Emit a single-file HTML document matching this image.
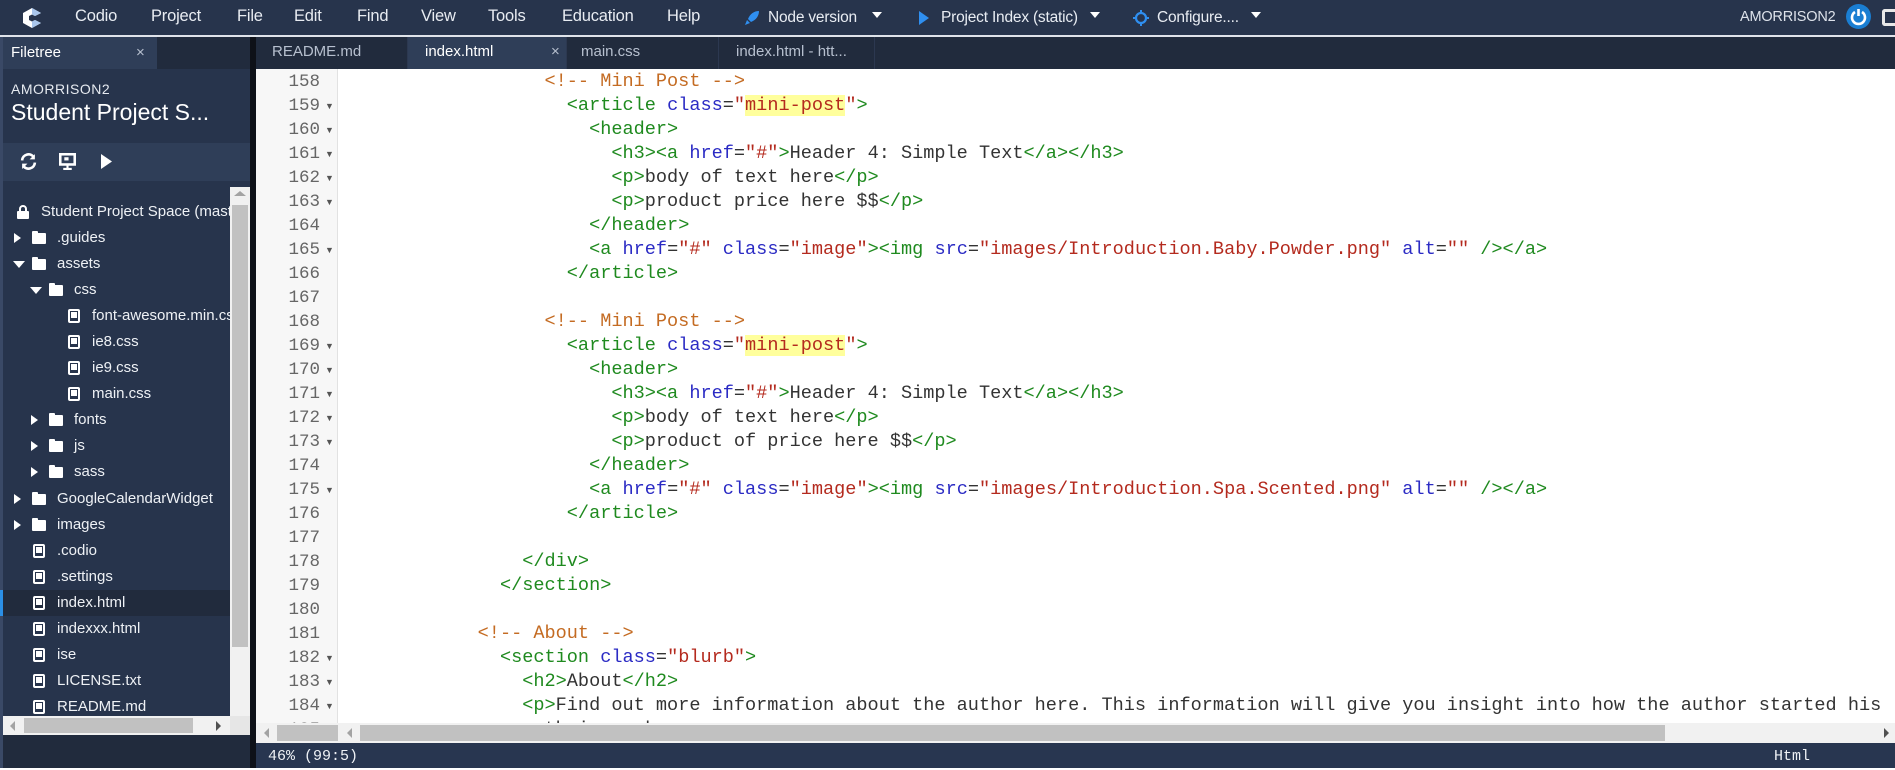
<!DOCTYPE html>
<html><head><meta charset="utf-8"><style>
*{margin:0;padding:0;box-sizing:border-box}
body{width:1895px;height:768px;overflow:hidden;background:#fff;font-family:"Liberation Sans",sans-serif;position:relative}
.abs{position:absolute}
#top{left:0;top:0;width:1895px;height:35px;background:#27344c}
#line{left:0;top:35px;width:1895px;height:2px;background:#dfe3ea}
.m{position:absolute;top:7px;color:#e8ecf2;font-size:16.5px;letter-spacing:-0.2px}
.car{position:absolute;top:12px;width:0;height:0;border-left:5px solid transparent;border-right:5px solid transparent;border-top:6px solid #fff}
#left{left:0;top:37px;width:250px;height:731px;background:#27344c}
#sep{left:250px;top:37px;width:6px;height:731px;background:#0e1118}
#tabs{left:256px;top:37px;width:1639px;height:32px;background:#212b3d}
.tab{position:absolute;top:0;height:32px;color:#b7c0cf;font-size:15px;line-height:30px;border-right:1px solid #2c3850}
.tree{position:absolute;left:0;width:230px;height:26px;color:#eef1f5;font-size:15px;line-height:26px;white-space:nowrap;overflow:hidden}
.tree span{position:absolute;top:0}
.fold{position:absolute;width:14px;height:11px;background:#fff;border-radius:1px;top:8px}
.fold:before{content:"";position:absolute;left:0;top:-2px;width:6px;height:3px;background:#fff;border-radius:1px 1px 0 0}
.file{position:absolute;top:6px;width:12px;height:14px;border:2px solid #fff;border-radius:2px;background:transparent}
.file:after{content:"";position:absolute;left:1px;top:1px;width:6px;height:6px;background:#fff}
.ar{position:absolute;top:8px;width:0;height:0;border-top:5px solid transparent;border-bottom:5px solid transparent;border-left:7px solid #fff}
.ad{position:absolute;top:10px;width:0;height:0;border-left:6px solid transparent;border-right:6px solid transparent;border-top:7px solid #fff}
#gut{left:256px;top:69px;width:82px;height:654px;background:#f7f7f7;border-right:1px solid #e2e2e2;overflow:hidden}
.ln{position:absolute;left:0;width:64px;text-align:right;font-family:"Liberation Mono",monospace;font-size:17.5px;color:#666;height:24px;line-height:24px}
.fa{position:absolute;left:69px;font-size:9px;color:#555;line-height:24px}
#code{left:344px;top:70px;width:1551px;height:653px;overflow:hidden}
.cl{position:absolute;left:0;height:24px;line-height:24px;white-space:pre;font-family:"Liberation Mono",monospace;font-size:18.57px;color:#333}
.t{color:#1f8a1f}.a{color:#2b2bc4}.s{color:#b42a1e}.c{color:#c46b22}.h{background:#ffff9c}
</style></head><body>
<div id="top" class="abs">
 <svg class="abs" style="left:21px;top:7px" width="22" height="22" viewBox="0 0 22 22"><path d="M11 1 L20 6 L14 9 L11 7.5 L8 9 L8 13 L11 14.5 L14 13 L20 16 L11 21 L2 16 L2 6 Z" fill="#fff"/><path d="M11 1 L20 6 L14 9 L11 7.5 Z" fill="#a9c6ec"/><path d="M14 13 L20 16 L11 21 L11 14.5 Z" fill="#a9c6ec"/></svg>
 <span class="m" style="left:75px">Codio</span>
 <span class="m" style="left:151px">Project</span>
 <span class="m" style="left:237px">File</span>
 <span class="m" style="left:294px">Edit</span>
 <span class="m" style="left:357px">Find</span>
 <span class="m" style="left:421px">View</span>
 <span class="m" style="left:488px">Tools</span>
 <span class="m" style="left:562px">Education</span>
 <span class="m" style="left:667px">Help</span>
 <svg class="abs" style="left:744px;top:10px" width="16" height="16" viewBox="0 0 16 16"><path d="M15 1 C10 1 6 4 4 9 L7 12 C12 10 15 6 15 1Z M3 10 L1 15 L6 13Z" fill="#2f8ff0"/></svg>
 <span class="m" style="left:768px;top:9px;font-size:15.5px">Node version</span>
 <div class="car" style="left:872px"></div>
 <svg class="abs" style="left:918px;top:11px" width="12" height="14"><path d="M1 0 L11 7 L1 14Z" fill="#2f8ff0"/></svg>
 <span class="m" style="left:941px;top:9px;font-size:15.5px">Project Index (static)</span>
 <div class="car" style="left:1090px"></div>
 <svg class="abs" style="left:1132px;top:9px" width="18" height="18" viewBox="0 0 18 18"><circle cx="9" cy="9" r="5" fill="none" stroke="#2f8ff0" stroke-width="2.2"/><path d="M9 1v4M9 13v4M1 9h4M13 9h4" stroke="#2f8ff0" stroke-width="2"/></svg>
 <span class="m" style="left:1157px;top:9px;font-size:15.5px">Configure....</span>
 <div class="car" style="left:1251px"></div>
 <span class="m" style="left:1740px;top:9px;font-size:14.5px;color:#dde2ea">AMORRISON2</span>
 <div class="abs" style="left:1846px;top:4px;width:25px;height:25px;border-radius:50%;background:#1a7ed2"></div>
 <svg class="abs" style="left:1846px;top:4px" width="25" height="25" viewBox="0 0 25 25"><path d="M9 8 A6.5 6.5 0 1 0 16 8" fill="none" stroke="#fff" stroke-width="2.6"/><path d="M12.5 5v7" stroke="#fff" stroke-width="2.6"/></svg>
 <div class="abs" style="left:1882px;top:9px;width:13px;height:17px;border:3px solid #e8e8e8;border-right:none;border-radius:3px 0 0 3px"></div>
</div>
<div id="line" class="abs"></div>
<div id="left" class="abs">
 <div class="abs" style="left:0;top:0;width:250px;height:32px;background:#212b3d"></div>
 <div class="abs" style="left:0;top:0;width:157px;height:32px;background:#2f3e58;color:#fff;font-size:15px;line-height:31px;padding-left:11px">Filetree<span style="position:absolute;left:136px;color:#b7c0cf">×</span></div>
 <div class="abs" style="left:11px;top:44px;color:#e6eaf0;font-size:14px;letter-spacing:.5px">AMORRISON2</div>
 <div class="abs" style="left:11px;top:62px;color:#fff;font-size:23px">Student Project S...</div>
 <div class="abs" style="left:0;top:106px;width:250px;height:38px;background:#2f3e58"></div>
 <svg class="abs" style="left:20px;top:116px" width="17" height="17" viewBox="0 0 16 16"><path d="M2 7 A6 6 0 0 1 13 4 M14 9 A6 6 0 0 1 3 12" fill="none" stroke="#fff" stroke-width="2.5"/><path d="M14 1 L14 6 L9 6Z M2 15 L2 10 L7 10Z" fill="#fff"/></svg>
 <svg class="abs" style="left:59px;top:116px" width="17" height="17" viewBox="0 0 16 16"><rect x="1.2" y="1.2" width="13.6" height="9.6" fill="none" stroke="#fff" stroke-width="2.4"/><rect x="5" y="4" width="4" height="3" fill="#fff"/><path d="M8 11v3M4 15h8" stroke="#fff" stroke-width="2"/></svg>
 <svg class="abs" style="left:100px;top:117px" width="13" height="15"><path d="M1 0 L12 7.5 L1 15Z" fill="#fff"/></svg>
 <div class="abs" style="left:230px;top:150px;width:20px;height:563px;background:#f1f1f1"></div>
 <div class="abs" style="left:232px;top:168px;width:16px;height:442px;background:#c1c1c1"></div>
 <div class="abs" style="left:234px;top:154px;border-left:6px solid transparent;border-right:6px solid transparent;border-bottom:5px solid #a3a3a3"></div>
 <div class="abs" style="left:234px;top:704px;border-left:6px solid transparent;border-right:6px solid transparent;border-top:5px solid #505050"></div>
 <div class="abs" style="left:0;top:679px;width:250px;height:19px;background:#f1f1f1"></div>
 <div class="abs" style="left:24px;top:681px;width:169px;height:15px;background:#c1c1c1"></div>
 <div class="abs" style="left:10px;top:684px;border-top:5px solid transparent;border-bottom:5px solid transparent;border-right:5px solid #a3a3a3"></div>
 <div class="abs" style="left:216px;top:684px;border-top:5px solid transparent;border-bottom:5px solid transparent;border-left:5px solid #505050"></div>
 <div class="abs" style="left:230px;top:679px;width:20px;height:19px;background:#e6e6e6"></div>
 <div class="abs" style="left:0;top:698px;width:250px;height:33px;background:#212b3d"></div>
</div>
<div class="abs" style="left:0;top:37px;width:3px;height:731px;background:#3a4966"></div>
<div class="tree" style="top:199px"><svg style="position:absolute;left:17px;top:6px" width="12" height="14"><path d="M3 6 V4 A3 3 0 0 1 9 4 V6" fill="none" stroke="#fff" stroke-width="2"/><rect x="0" y="6" width="12" height="8" rx="1" fill="#fff"/></svg><span style="left:41px">Student Project Space (master)</span></div>
<div class="tree" style="top:225px"><div class="ar" style="left:14px"></div><div class="fold" style="left:32px"></div><span style="left:57px">.guides</span></div>
<div class="tree" style="top:251px"><div class="ad" style="left:13px"></div><div class="fold" style="left:32px"></div><span style="left:57px">assets</span></div>
<div class="tree" style="top:277px"><div class="ad" style="left:30px"></div><div class="fold" style="left:49px"></div><span style="left:74px">css</span></div>
<div class="tree" style="top:303px"><div class="file" style="left:68px"></div><span style="left:92px">font-awesome.min.css</span></div>
<div class="tree" style="top:329px"><div class="file" style="left:68px"></div><span style="left:92px">ie8.css</span></div>
<div class="tree" style="top:355px"><div class="file" style="left:68px"></div><span style="left:92px">ie9.css</span></div>
<div class="tree" style="top:381px"><div class="file" style="left:68px"></div><span style="left:92px">main.css</span></div>
<div class="tree" style="top:407px"><div class="ar" style="left:31px"></div><div class="fold" style="left:49px"></div><span style="left:74px">fonts</span></div>
<div class="tree" style="top:433px"><div class="ar" style="left:31px"></div><div class="fold" style="left:49px"></div><span style="left:74px">js</span></div>
<div class="tree" style="top:459px"><div class="ar" style="left:31px"></div><div class="fold" style="left:49px"></div><span style="left:74px">sass</span></div>
<div class="tree" style="top:486px"><div class="ar" style="left:14px"></div><div class="fold" style="left:32px"></div><span style="left:57px">GoogleCalendarWidget</span></div>
<div class="tree" style="top:512px"><div class="ar" style="left:14px"></div><div class="fold" style="left:32px"></div><span style="left:57px">images</span></div>
<div class="tree" style="top:538px"><div class="file" style="left:33px"></div><span style="left:57px">.codio</span></div>
<div class="tree" style="top:564px"><div class="file" style="left:33px"></div><span style="left:57px">.settings</span></div>
<div class="tree" style="top:590px;background:#212b3d;border-left:3px solid #2b8fe6"><div class="file" style="left:30px"></div><span style="left:54px">index.html</span></div>
<div class="tree" style="top:616px"><div class="file" style="left:33px"></div><span style="left:57px">indexxx.html</span></div>
<div class="tree" style="top:642px"><div class="file" style="left:33px"></div><span style="left:57px">ise</span></div>
<div class="tree" style="top:668px"><div class="file" style="left:33px"></div><span style="left:57px">LICENSE.txt</span></div>
<div class="tree" style="top:694px;height:22px"><div class="file" style="left:33px"></div><span style="left:57px">README.md</span></div>
<div id="sep" class="abs"></div>
<div id="tabs" class="abs">
 <div class="tab" style="left:0;width:152px;padding-left:16px">README.md</div>
 <div class="tab" style="left:152px;width:159px;padding-left:17px;background:#2f3e58;color:#fff">index.html<span style="position:absolute;left:143px;color:#b7c0cf">×</span></div>
 <div class="tab" style="left:311px;width:152px;padding-left:14px">main.css</div>
 <div class="tab" style="left:463px;width:156px;padding-left:17px">index.html - htt...</div>
</div>
<div id="gut" class="abs">
<div class="ln" style="top:1px">158</div>
<div class="ln" style="top:25px">159</div><div class="fa" style="top:25px">▼</div>
<div class="ln" style="top:49px">160</div><div class="fa" style="top:49px">▼</div>
<div class="ln" style="top:73px">161</div><div class="fa" style="top:73px">▼</div>
<div class="ln" style="top:97px">162</div><div class="fa" style="top:97px">▼</div>
<div class="ln" style="top:121px">163</div><div class="fa" style="top:121px">▼</div>
<div class="ln" style="top:145px">164</div>
<div class="ln" style="top:169px">165</div><div class="fa" style="top:169px">▼</div>
<div class="ln" style="top:193px">166</div>
<div class="ln" style="top:217px">167</div>
<div class="ln" style="top:241px">168</div>
<div class="ln" style="top:265px">169</div><div class="fa" style="top:265px">▼</div>
<div class="ln" style="top:289px">170</div><div class="fa" style="top:289px">▼</div>
<div class="ln" style="top:313px">171</div><div class="fa" style="top:313px">▼</div>
<div class="ln" style="top:337px">172</div><div class="fa" style="top:337px">▼</div>
<div class="ln" style="top:361px">173</div><div class="fa" style="top:361px">▼</div>
<div class="ln" style="top:385px">174</div>
<div class="ln" style="top:409px">175</div><div class="fa" style="top:409px">▼</div>
<div class="ln" style="top:433px">176</div>
<div class="ln" style="top:457px">177</div>
<div class="ln" style="top:481px">178</div>
<div class="ln" style="top:505px">179</div>
<div class="ln" style="top:529px">180</div>
<div class="ln" style="top:553px">181</div>
<div class="ln" style="top:577px">182</div><div class="fa" style="top:577px">▼</div>
<div class="ln" style="top:601px">183</div><div class="fa" style="top:601px">▼</div>
<div class="ln" style="top:625px">184</div><div class="fa" style="top:625px">▼</div>
<div class="ln" style="top:649px">185</div>
</div>
<div id="code" class="abs">
<div class="cl" style="top:0">                  <span class="c">&lt;!-- Mini Post --&gt;</span></div>
<div class="cl" style="top:24px">                    <span class="t">&lt;article</span> <span class="a">class</span>=<span class="s">"<span class="h">mini-post</span>"</span><span class="t">&gt;</span></div>
<div class="cl" style="top:48px">                      <span class="t">&lt;header&gt;</span></div>
<div class="cl" style="top:72px">                        <span class="t">&lt;h3&gt;&lt;a</span> <span class="a">href</span>=<span class="s">"#"</span><span class="t">&gt;</span>Header 4: Simple Text<span class="t">&lt;/a&gt;&lt;/h3&gt;</span></div>
<div class="cl" style="top:96px">                        <span class="t">&lt;p&gt;</span>body of text here<span class="t">&lt;/p&gt;</span></div>
<div class="cl" style="top:120px">                        <span class="t">&lt;p&gt;</span>product price here $$<span class="t">&lt;/p&gt;</span></div>
<div class="cl" style="top:144px">                      <span class="t">&lt;/header&gt;</span></div>
<div class="cl" style="top:168px">                      <span class="t">&lt;a</span> <span class="a">href</span>=<span class="s">"#"</span> <span class="a">class</span>=<span class="s">"image"</span><span class="t">&gt;&lt;img</span> <span class="a">src</span>=<span class="s">"images/Introduction.Baby.Powder.png"</span> <span class="a">alt</span>=<span class="s">""</span> <span class="t">/&gt;&lt;/a&gt;</span></div>
<div class="cl" style="top:192px">                    <span class="t">&lt;/article&gt;</span></div>
<div class="cl" style="top:240px">                  <span class="c">&lt;!-- Mini Post --&gt;</span></div>
<div class="cl" style="top:264px">                    <span class="t">&lt;article</span> <span class="a">class</span>=<span class="s">"<span class="h">mini-post</span>"</span><span class="t">&gt;</span></div>
<div class="cl" style="top:288px">                      <span class="t">&lt;header&gt;</span></div>
<div class="cl" style="top:312px">                        <span class="t">&lt;h3&gt;&lt;a</span> <span class="a">href</span>=<span class="s">"#"</span><span class="t">&gt;</span>Header 4: Simple Text<span class="t">&lt;/a&gt;&lt;/h3&gt;</span></div>
<div class="cl" style="top:336px">                        <span class="t">&lt;p&gt;</span>body of text here<span class="t">&lt;/p&gt;</span></div>
<div class="cl" style="top:360px">                        <span class="t">&lt;p&gt;</span>product of price here $$<span class="t">&lt;/p&gt;</span></div>
<div class="cl" style="top:384px">                      <span class="t">&lt;/header&gt;</span></div>
<div class="cl" style="top:408px">                      <span class="t">&lt;a</span> <span class="a">href</span>=<span class="s">"#"</span> <span class="a">class</span>=<span class="s">"image"</span><span class="t">&gt;&lt;img</span> <span class="a">src</span>=<span class="s">"images/Introduction.Spa.Scented.png"</span> <span class="a">alt</span>=<span class="s">""</span> <span class="t">/&gt;&lt;/a&gt;</span></div>
<div class="cl" style="top:432px">                    <span class="t">&lt;/article&gt;</span></div>
<div class="cl" style="top:480px">                <span class="t">&lt;/div&gt;</span></div>
<div class="cl" style="top:504px">              <span class="t">&lt;/section&gt;</span></div>
<div class="cl" style="top:552px">            <span class="c">&lt;!-- About --&gt;</span></div>
<div class="cl" style="top:576px">              <span class="t">&lt;section</span> <span class="a">class</span>=<span class="s">"blurb"</span><span class="t">&gt;</span></div>
<div class="cl" style="top:600px">                <span class="t">&lt;h2&gt;</span>About<span class="t">&lt;/h2&gt;</span></div>
<div class="cl" style="top:624px">                <span class="t">&lt;p&gt;</span>Find out more information about the author here. This information will give you insight into how the author started his</div>
<div class="cl" style="top:648px">                  their work</div>
</div>
<div class="abs" style="left:256px;top:723px;width:1639px;height:20px;background:#f1f1f1"></div>
<div class="abs" style="left:277px;top:725px;width:61px;height:16px;background:#c1c1c1"></div>
<div class="abs" style="left:360px;top:725px;width:1305px;height:16px;background:#c1c1c1"></div>
<div class="abs" style="left:264px;top:728px;border-top:5px solid transparent;border-bottom:5px solid transparent;border-right:5px solid #a3a3a3"></div>
<div class="abs" style="left:347px;top:728px;border-top:5px solid transparent;border-bottom:5px solid transparent;border-right:5px solid #a3a3a3"></div>
<div class="abs" style="left:1884px;top:728px;border-top:5px solid transparent;border-bottom:5px solid transparent;border-left:5px solid #505050"></div>
<div class="abs" style="left:256px;top:743px;width:1639px;height:25px;background:#283650;color:#eef1f5;font-family:'Liberation Mono',monospace;font-size:15px;line-height:27px">
 <span style="position:absolute;left:12px">46% (99:5)</span><span style="position:absolute;left:1518px">Html</span>
</div>
</body></html>
